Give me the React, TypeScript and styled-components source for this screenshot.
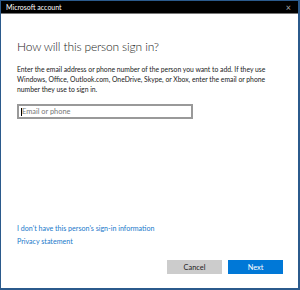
import React from "react";
import styled, { createGlobalStyle } from "styled-components";

const Global = createGlobalStyle`
  html, body { margin: 0; padding: 0; background: #fff; }
  * { box-sizing: border-box; }
`;

const Window = styled.div`
  width: 300px;
  height: 290px;
  display: flex;
  flex-direction: column;
  border: 1px solid #2b5a8c;
  border-right-width: 2px;
  border-bottom-width: 2px;
  background: #fff;
  font-family: Lato, "Noto Sans", sans-serif;
`;

const TitleBar = styled.div`
  height: 13px;
  flex: none;
  background: #000;
  border-bottom: 1px solid #777;
  display: flex;
  align-items: center;
  justify-content: space-between;
  padding: 0 7px 0 5px;
  color: #fff;
  font-size: 7px;
`;

const Close = styled.span`
  font-size: 9px;
  color: #aaa;
  line-height: 1;
`;

const Content = styled.div`
  flex: 1;
  display: flex;
  flex-direction: column;
  padding: 25px 15px 14px 16px;
`;

const Heading = styled.h1`
  margin: 0;
  font-weight: 300;
  font-size: 12px;
  letter-spacing: -0.15px;
  line-height: 16px;
  color: #222;
`;

const Body = styled.p`
  margin: 9px 0 0;
  font-size: 6.8px;
  line-height: 10px;
  color: #222;
  white-space: nowrap;
`;

const Field = styled.div`
  margin-top: 10px;
  width: 176px;
  height: 15px;
  border: 2px solid #999;
  display: flex;
  align-items: center;
  padding-left: 2px;
  font-size: 7.4px;
  color: #777;
`;

const Caret = styled.span`
  width: 1px;
  height: 8px;
  background: #000;
`;

const Links = styled.div`
  margin-top: auto;
  display: flex;
  flex-direction: column;
  gap: 3px;
`;

const Link = styled.a`
  font-size: 7.1px;
  line-height: 10px;
  color: #1979ca;
  text-decoration: none;
`;

const Buttons = styled.div`
  margin-top: 13px;
  display: flex;
  justify-content: flex-end;
  gap: 6px;
`;

const Button = styled.button<{ $primary?: boolean }>`
  width: 55px;
  height: 14px;
  border: none;
  padding: 0;
  font-family: inherit;
  font-size: 7.4px;
  background: ${(p) => (p.$primary ? "#0078d7" : "#cccccc")};
  color: ${(p) => (p.$primary ? "#fff" : "#222")};
`;

export default function App() {
  return (
    <>
      <Global />
      <Window>
        <TitleBar>
          <span>Microsoft account</span>
          <Close>×</Close>
        </TitleBar>
        <Content>
          <Heading>How will this person sign in?</Heading>
          <Body>
            Enter the email address or phone number of the person you want to add. If they use
            <br />
            Windows, Office, Outlook.com, OneDrive, Skype, or Xbox, enter the email or phone
            <br />
            number they use to sign in.
          </Body>
          <Field>
            <Caret />
            Email or phone
          </Field>
          <Links>
            <Link href="#">I don't have this person's sign-in information</Link>
            <Link href="#">Privacy statement</Link>
          </Links>
          <Buttons>
            <Button>Cancel</Button>
            <Button $primary>Next</Button>
          </Buttons>
        </Content>
      </Window>
    </>
  );
}
